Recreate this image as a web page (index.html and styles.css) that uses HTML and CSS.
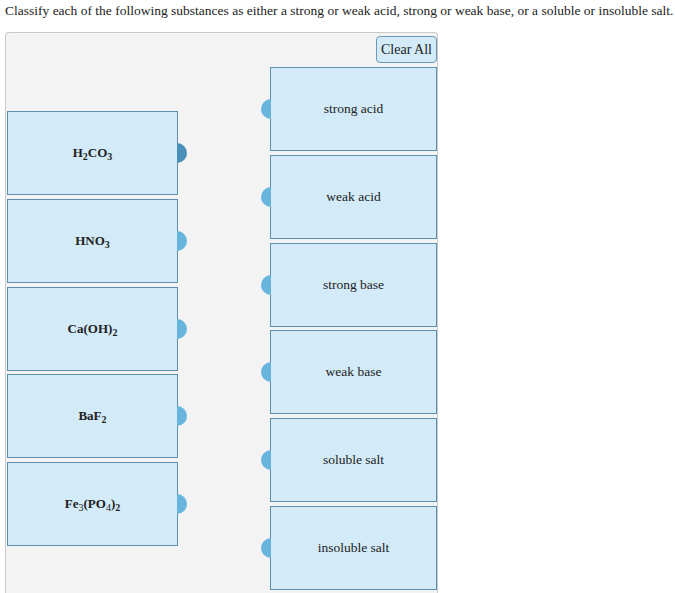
FILE: index.html
```html
<!DOCTYPE html>
<html>
<head>
<meta charset="utf-8">
<link rel="stylesheet" href="styles.css">
</head>
<body>
<p class="prompt">Classify each of the following substances as either a strong or weak acid, strong or weak base, or a soluble or insoluble salt.</p>
<div class="board">
  <div class="toolbar"><button class="clear">Clear All</button></div>
  <div class="columns">
    <div class="col left">
      <div class="item"><span class="chem">H<sub>2</sub>CO<sub>3</sub></span><span class="knob knob-r active"></span></div>
      <div class="item"><span class="chem">HNO<sub>3</sub></span><span class="knob knob-r"></span></div>
      <div class="item"><span class="chem">Ca(OH)<sub>2</sub></span><span class="knob knob-r"></span></div>
      <div class="item"><span class="chem">BaF<sub>2</sub></span><span class="knob knob-r"></span></div>
      <div class="item"><span class="chem">Fe<sub class="thin">3</sub>(PO<sub class="thin">4</sub>)<sub>2</sub></span><span class="knob knob-r"></span></div>
    </div>
    <div class="col right">
      <div class="target"><span class="knob knob-l"></span>strong acid</div>
      <div class="target"><span class="knob knob-l"></span>weak acid</div>
      <div class="target"><span class="knob knob-l"></span>strong base</div>
      <div class="target"><span class="knob knob-l"></span>weak base</div>
      <div class="target"><span class="knob knob-l"></span>soluble salt</div>
      <div class="target"><span class="knob knob-l"></span>insoluble salt</div>
    </div>
  </div>
</div>
</body>
</html>
```
FILE: styles.css
```css
html, body {
  margin: 0;
  padding: 0;
  background: #ffffff;
}
body {
  font-family: "Liberation Serif", "Times New Roman", serif;
  color: #222;
  padding: 0 0 0 5px;
}
.prompt {
  margin: 0;
  padding-top: 3px;
  font-size: 13.5px;
  line-height: 16px;
  height: 29px;
  white-space: nowrap;
}
.board {
  width: 430px;
  height: 580px;
  background: #f3f3f3;
  border: 1px solid #c9c9c9;
  border-bottom: none;
  border-radius: 4px 4px 0 0;
  padding: 3px 0 0 1px;
  box-sizing: content-box;
}
.toolbar {
  display: flex;
  justify-content: flex-end;
}
.clear {
  font-family: "Liberation Serif", "Times New Roman", serif;
  font-size: 14px;
  color: #222;
  background: #d3eaf8;
  border: 1px solid #6b98b6;
  border-radius: 4px;
  height: 27px;
  width: 61px;
  padding: 0;
  margin: 0;
}
.columns {
  display: flex;
  justify-content: space-between;
  margin-top: 4px;
}
.col {
  display: flex;
  flex-direction: column;
  gap: 3.8px;
}
.left {
  margin-top: 44px;
}
.item, .target {
  position: relative;
  box-sizing: border-box;
  height: 84px;
  background: #d3eaf8;
  border: 1px solid #5d8fae;
  display: flex;
  align-items: center;
  justify-content: center;
  font-size: 13.5px;
}
.item {
  width: 171px;
  font-weight: bold;
  font-size: 13px;
}
.target {
  width: 167px;
}
.chem sub {
  font-size: 10px;
  vertical-align: -3px;
  line-height: 0;
}
.chem sub.thin {
  font-weight: normal;
}
.knob {
  position: absolute;
  top: 50%;
  width: 10px;
  height: 20px;
  margin-top: -10px;
  background: #67b4dd;
}
.knob-r {
  left: 100%;
  border-radius: 0 10px 10px 0;
}
.knob-r.active {
  background: #4a8fb8;
}
.knob-l {
  right: 100%;
  border-radius: 10px 0 0 10px;
}
```
